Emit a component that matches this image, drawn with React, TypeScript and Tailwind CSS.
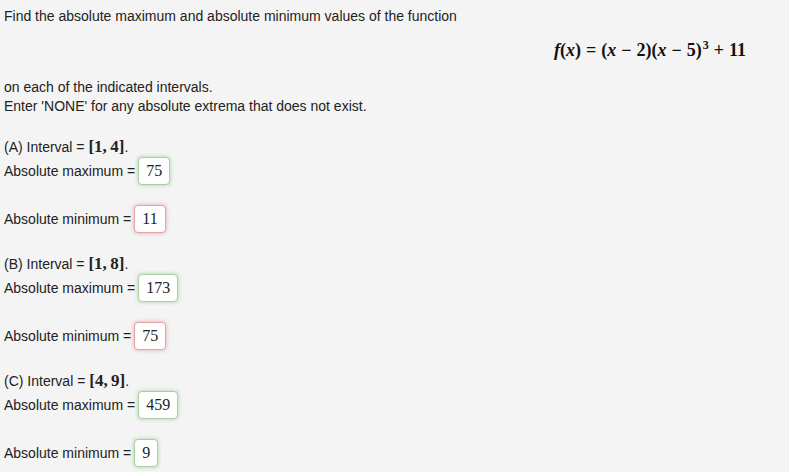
import React from "react"

const sans = { fontFamily: '"Liberation Sans", Arial, sans-serif' }

function Answer({ value, ok }: { value: string; ok: boolean }) {
  return (
    <span
      className={`inline-flex items-center justify-center h-[28px] px-[7px] rounded-[4px] bg-white border font-['Liberation_Serif',serif] text-[16px] text-[#222] ${
        ok
          ? "border-[#a8cfa0] shadow-[0_0_4px_rgba(80,170,70,0.45)]"
          : "border-[#e0a4a4] shadow-[0_0_4px_rgba(210,80,80,0.45)]"
      }`}
    >
      {value}
    </span>
  )
}

function Interval({ label, a, b }: { label: string; a: string; b: string }) {
  return (
    <div className="h-[20px] leading-[20px]">
      ({label}) Interval ={" "}
      <span className="font-['Liberation_Serif',serif] font-bold text-[17px]">
        [{a},&thinsp;{b}]
      </span>
      .
    </div>
  )
}

function Row({ label, value, ok }: { label: string; value: string; ok: boolean }) {
  return (
    <div className="flex items-center gap-[3px] h-[28px]">
      <span>{label} =</span>
      <Answer value={value} ok={ok} />
    </div>
  )
}

const parts = [
  { label: "A", a: "1", b: "4", max: "75", maxOk: true, min: "11", minOk: false },
  { label: "B", a: "1", b: "8", max: "173", maxOk: true, min: "75", minOk: false },
  { label: "C", a: "4", b: "9", max: "459", maxOk: true, min: "9", minOk: true },
]

const Op = ({ c }: { c: string }) => <span className="mx-[5px]">{c}</span>

export default function App() {
  return (
    <div className="w-[789px] h-[472px] overflow-hidden bg-[#f4f4f4] text-[14px] text-[#222] pl-[4px] pt-[6px]" style={sans}>
      <p className="leading-[20px]">Find the absolute maximum and absolute minimum values of the function</p>

      <div className="flex justify-end pr-[43px] mt-[14px] h-[22px] leading-[22px] items-center font-['Liberation_Serif',serif] text-[18px] font-bold text-[#111]">
        <span className="whitespace-nowrap">
          <i>f</i>(<i>x</i>)<Op c="=" />(<i>x</i>
          <Op c="−" />2)(<i>x</i>
          <Op c="−" />5)
          <span className="relative -top-[7px] text-[12px] ml-[1px]">3</span>
          <Op c="+" />11
        </span>
      </div>

      <div className="mt-[16px] leading-[19px]">
        <p>on each of the indicated intervals.</p>
        <p>Enter 'NONE' for any absolute extrema that does not exist.</p>
      </div>

      <div className="mt-[21px] flex flex-col gap-[21px]">
        {parts.map((p) => (
          <div key={p.label} className="flex flex-col">
            <Interval label={p.label} a={p.a} b={p.b} />
            <Row label="Absolute maximum" value={p.max} ok={p.maxOk} />
            <div className="mt-[20px]">
              <Row label="Absolute minimum" value={p.min} ok={p.minOk} />
            </div>
          </div>
        ))}
      </div>
    </div>
  )
}
